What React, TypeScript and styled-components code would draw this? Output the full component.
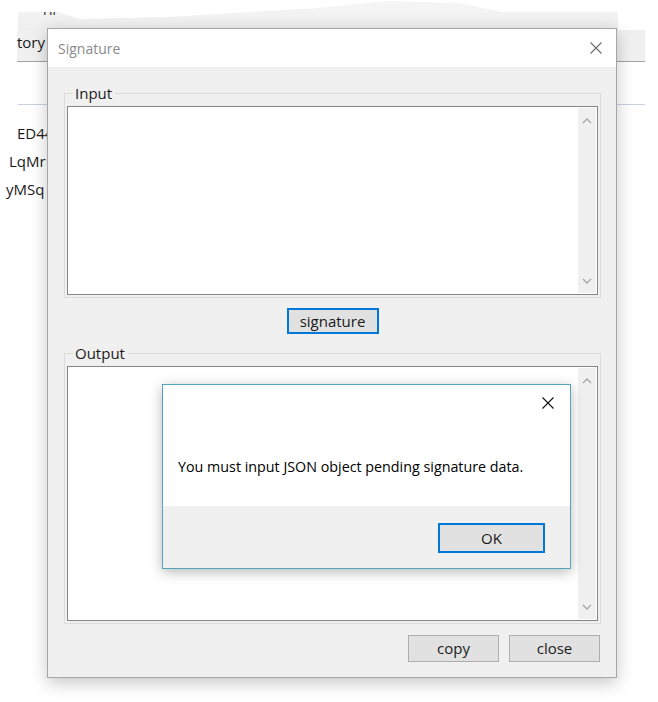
import React from "react";
import styled, { createGlobalStyle } from "styled-components";

const GlobalStyle = createGlobalStyle`
  html, body {
    margin: 0;
    padding: 0;
    background: #ffffff;
  }
  * {
    box-sizing: border-box;
  }
`;

const Desktop = styled.div`
  position: relative;
  width: 658px;
  height: 702px;
  overflow: hidden;
  background: #ffffff;
  font-family: "Open Sans", "Noto Sans", sans-serif;
  font-size: 14px;
  color: #1a1a1a;
`;

/* window lying behind the dialog, torn screenshot fragment */
const BackWindow = styled.div`
  position: absolute;
  top: 0;
  left: 0;
  width: 646px;
  display: flex;
  flex-direction: column;
`;

const TornEdge = styled.div`
  margin-left: 18px;
  width: 600px;
  height: 30px;
  background: linear-gradient(#f6f6f6, #eeeeee);
  clip-path: polygon(
    0 12px,
    40px 12px,
    62px 19px,
    150px 17px,
    300px 8px,
    370px 1px,
    440px 3px,
    484px 12px,
    600px 12px,
    600px 30px,
    0 30px
  );
`;

const FragmentText = styled.div`
  padding: 3px 0 0 25px;
  font-size: 13px;
  line-height: 14px;
  color: #222;
`;

const TabRow = styled.div`
  margin-left: 17px;
  width: 628px;
  height: 32px;
  padding-top: 2px;
  background: #f0f0f0;
  border-bottom: 1px solid #a3a3a3;
  line-height: 20px;
  font-size: 15px;
  color: #1a1a1a;
`;

const Divider = styled.div`
  margin: 42px 0 0 18px;
  width: 627px;
  height: 1px;
  background: #c9d0df;
`;

const List = styled.div`
  padding-top: 14px;
  display: flex;
  flex-direction: column;
`;

const ListRow = styled.div<{ $indent: number }>`
  padding-left: ${(p) => p.$indent}px;
  line-height: 28px;
  font-size: 15px;
  color: #1a1a1a;
  white-space: nowrap;
`;

/* main dialog */
const Dialog = styled.div`
  position: absolute;
  left: 47px;
  top: 28px;
  width: 570px;
  height: 650px;
  border: 1px solid #a6a6a6;
  background: #f0f0f0;
  box-shadow: 0 5px 16px rgba(0, 0, 0, 0.22);
  display: flex;
  flex-direction: column;
`;

const TitleBar = styled.div`
  height: 38px;
  background: #ffffff;
  display: flex;
  align-items: center;
  justify-content: space-between;
  padding: 0 14px 0 10px;
`;

const TitleText = styled.span`
  font-size: 14px;
  color: #8a8a8a;
`;

const Body = styled.div`
  flex: 1;
  display: flex;
  flex-direction: column;
  padding: 17px 15px 15px 16px;
`;

const GroupBox = styled.fieldset`
  margin: 0;
  padding: 4px 2px 2px 2px;
  border: 1px solid #dcdcdc;
  min-width: 0;
`;

const GroupLabel = styled.legend`
  margin-left: 6px;
  padding: 0 3px 0 2px;
  font-size: 15px;
  line-height: 18px;
  color: #1a1a1a;
`;

const TextBox = styled.div<{ $height: number }>`
  height: ${(p) => p.$height}px;
  border: 1px solid #858585;
  background: #ffffff;
  display: flex;
`;

const EditArea = styled.div`
  flex: 1;
`;

const ScrollTrack = styled.div`
  width: 18px;
  margin: 1px;
  background: #f0f0f0;
  display: flex;
  flex-direction: column;
  justify-content: space-between;
  align-items: center;
  padding: 10px 0 9px;
`;

const Button = styled.button<{ $focused?: boolean; $w: number; $h: number }>`
  width: ${(p) => p.$w}px;
  height: ${(p) => p.$h}px;
  padding: 0;
  background: #e1e1e1;
  border: ${(p) => (p.$focused ? "2px solid #0078d7" : "1px solid #adadad")};
  font-family: "Open Sans", "Noto Sans", sans-serif;
  font-size: 15px;
  color: #1a1a1a;
  line-height: 1;
`;

const CenterRow = styled.div`
  display: flex;
  justify-content: center;
  margin: 10px 0;
`;

const ActionRow = styled.div`
  display: flex;
  justify-content: flex-end;
  gap: 10px;
  margin-top: 11px;
  padding-right: 1px;
`;

/* message box */
const MessageBox = styled.div`
  position: absolute;
  left: 162px;
  top: 384px;
  width: 409px;
  height: 185px;
  border: 1px solid #52a5bb;
  background: #f0f0f0;
  box-shadow: 0 3px 12px rgba(0, 0, 0, 0.28);
  display: flex;
  flex-direction: column;
`;

const MessageContent = styled.div`
  height: 121px;
  background: #ffffff;
  padding: 12px 16px 0 15px;
  display: flex;
  flex-direction: column;
`;

const CloseRow = styled.div`
  display: flex;
  justify-content: flex-end;
`;

const MessageText = styled.div`
  margin-top: 48px;
  line-height: 20px;
  font-size: 14.3px;
  color: #000000;
`;

const MessageFooter = styled.div`
  flex: 1;
  display: flex;
  justify-content: flex-end;
  align-items: flex-start;
  padding: 17px 25px 0 0;
`;

const CloseIcon = ({ color }: { color: string }) => (
  <svg width="12" height="12" viewBox="0 0 12 12">
    <path d="M0.5 0.5 L11.5 11.5 M11.5 0.5 L0.5 11.5" stroke={color} strokeWidth="1.1" fill="none" />
  </svg>
);

const Chevron = ({ up }: { up?: boolean }) => (
  <svg width="10" height="6" viewBox="0 0 10 6">
    <path
      d={up ? "M1 5 L5 1 L9 5" : "M1 1 L5 5 L9 1"}
      stroke="#a8a8a8"
      strokeWidth="1.4"
      fill="none"
    />
  </svg>
);

const ScrollBox = ({ height }: { height: number }) => (
  <TextBox $height={height}>
    <EditArea />
    <ScrollTrack>
      <Chevron up />
      <Chevron />
    </ScrollTrack>
  </TextBox>
);

export default function App() {
  return (
    <Desktop>
      <GlobalStyle />
      <BackWindow>
        <TornEdge>
          <FragmentText>Hi</FragmentText>
        </TornEdge>
        <TabRow>tory</TabRow>
        <Divider />
        <List>
          <ListRow $indent={17}>ED44</ListRow>
          <ListRow $indent={9}>LqMr</ListRow>
          <ListRow $indent={6}>yMSq</ListRow>
        </List>
      </BackWindow>

      <Dialog>
        <TitleBar>
          <TitleText>Signature</TitleText>
          <CloseIcon color="#6b6b6b" />
        </TitleBar>
        <Body>
          <GroupBox>
            <GroupLabel>Input</GroupLabel>
            <ScrollBox height={189} />
          </GroupBox>
          <CenterRow>
            <Button $focused $w={92} $h={26}>
              signature
            </Button>
          </CenterRow>
          <GroupBox>
            <GroupLabel>Output</GroupLabel>
            <ScrollBox height={255} />
          </GroupBox>
          <ActionRow>
            <Button $w={91} $h={27}>
              copy
            </Button>
            <Button $w={91} $h={27}>
              close
            </Button>
          </ActionRow>
        </Body>
      </Dialog>

      <MessageBox>
        <MessageContent>
          <CloseRow>
            <CloseIcon color="#111111" />
          </CloseRow>
          <MessageText>You must input JSON object pending signature data.</MessageText>
        </MessageContent>
        <MessageFooter>
          <Button $focused $w={107} $h={30}>
            OK
          </Button>
        </MessageFooter>
      </MessageBox>
    </Desktop>
  );
}
